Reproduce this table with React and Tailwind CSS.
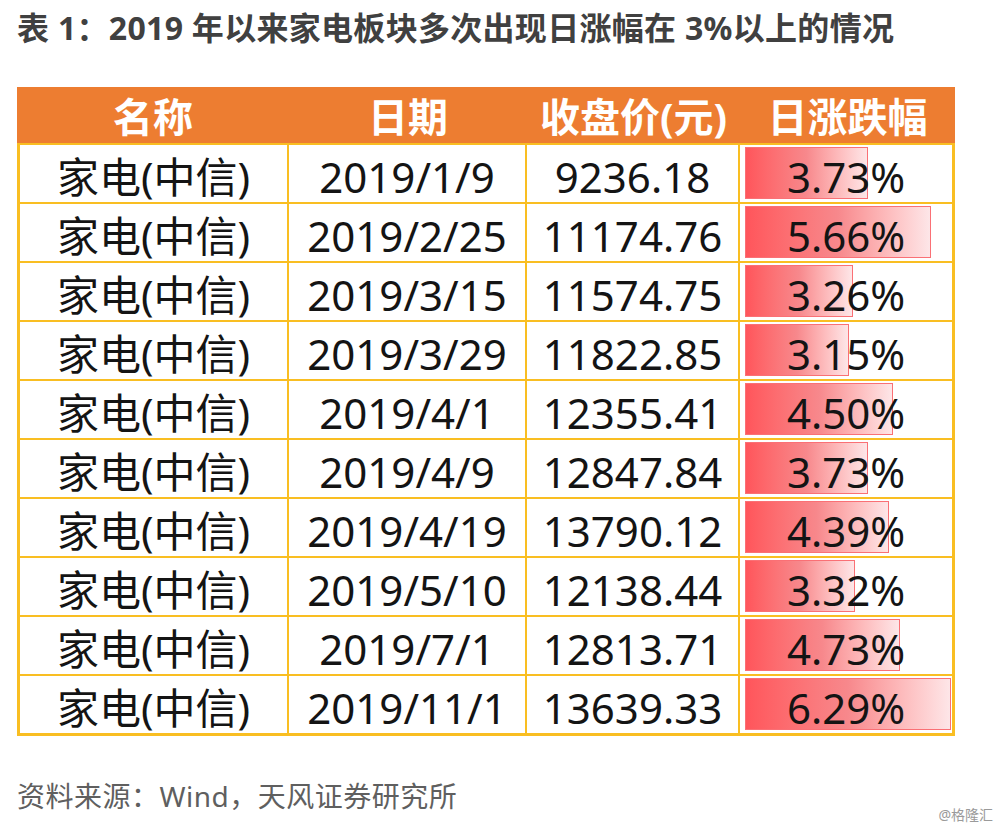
import React from "react";

const rows = [
    ["2019/1/9", "9236.18", 3.73],
    ["2019/2/25", "11174.76", 5.66],
    ["2019/3/15", "11574.75", 3.26],
    ["2019/3/29", "11822.85", 3.15],
    ["2019/4/1", "12355.41", 4.5],
    ["2019/4/9", "12847.84", 3.73],
    ["2019/4/19", "13790.12", 4.39],
    ["2019/5/10", "12138.44", 3.32],
    ["2019/7/1", "12813.71", 4.73],
    ["2019/11/1", "13639.33", 6.29],
];

// excel-style data bar: min 3.15 -> 104px, max 6.29 -> 206px
const barWidth = (v) => Math.round(104 + (v - 3.15) * 32.5);

const cellFont = { fontFamily: '"Noto Sans", "Noto Sans CJK SC", sans-serif' };

const App = () => {
    return (
        <div
            className="relative h-[831px] w-[1000px] bg-white pl-[17px]"
            style={cellFont}
        >
            {/* title */}
            <div className="flex h-[56px] items-center text-[32px] font-bold tracking-[0.3px] text-[#404040]">
                表 1：2019 年以来家电板块多次出现日涨幅在 3%以上的情况
            </div>

            {/* table */}
            <div className="mt-[31px] w-[938px]">
                <div className="grid h-[56px] grid-cols-[272px_238px_213px_215px] bg-[#ED7D31] text-[40px] font-bold text-white">
                    <div className="flex items-center justify-center">名称</div>
                    <div className="flex items-center justify-center">日期</div>
                    <div className="flex items-center justify-center">收盘价(元)</div>
                    <div className="flex items-center justify-center">日涨跌幅</div>
                </div>
                <div className="grid grid-cols-[267px_236px_211px_212px] gap-[2px] bg-[#F9BE22] pt-[2px] pr-[3px] pb-[3px] pl-[3px] text-[42px] text-[#141414]">
                    {rows.map(([date, close, pct]) => (
                        <React.Fragment key={date}>
                            <div className="flex h-[57px] items-center justify-center bg-white pt-[5px]">
                                家电(中信)
                            </div>
                            <div className="flex h-[57px] items-center justify-center bg-white pt-[5px]">
                                {date}
                            </div>
                            <div className="flex h-[57px] items-center justify-center bg-white pt-[5px]">
                                {close}
                            </div>
                            <div className="relative flex h-[57px] items-center justify-center bg-white pt-[5px]">
                                <div
                                    className="absolute top-[2px] bottom-[3px] left-[5px] border border-[#FA7075] bg-linear-to-r from-[#FF555B] via-[#F7888C] to-[#FDE6E8]"
                                    style={{ width: barWidth(pct) }}
                                />
                                <span className="relative">{pct.toFixed(2)}%</span>
                            </div>
                        </React.Fragment>
                    ))}
                </div>
            </div>

            {/* source */}
            <div className="mt-[40px] flex h-[40px] items-center text-[28px] tracking-[0.5px] text-[#5f5f5f]">
                资料来源：Wind，天风证券研究所
            </div>

            <div className="absolute right-[7px] bottom-[6px] text-[14px] text-[#9a9a9a]">
                @格隆汇
            </div>
        </div>
    );
};

export default App;
